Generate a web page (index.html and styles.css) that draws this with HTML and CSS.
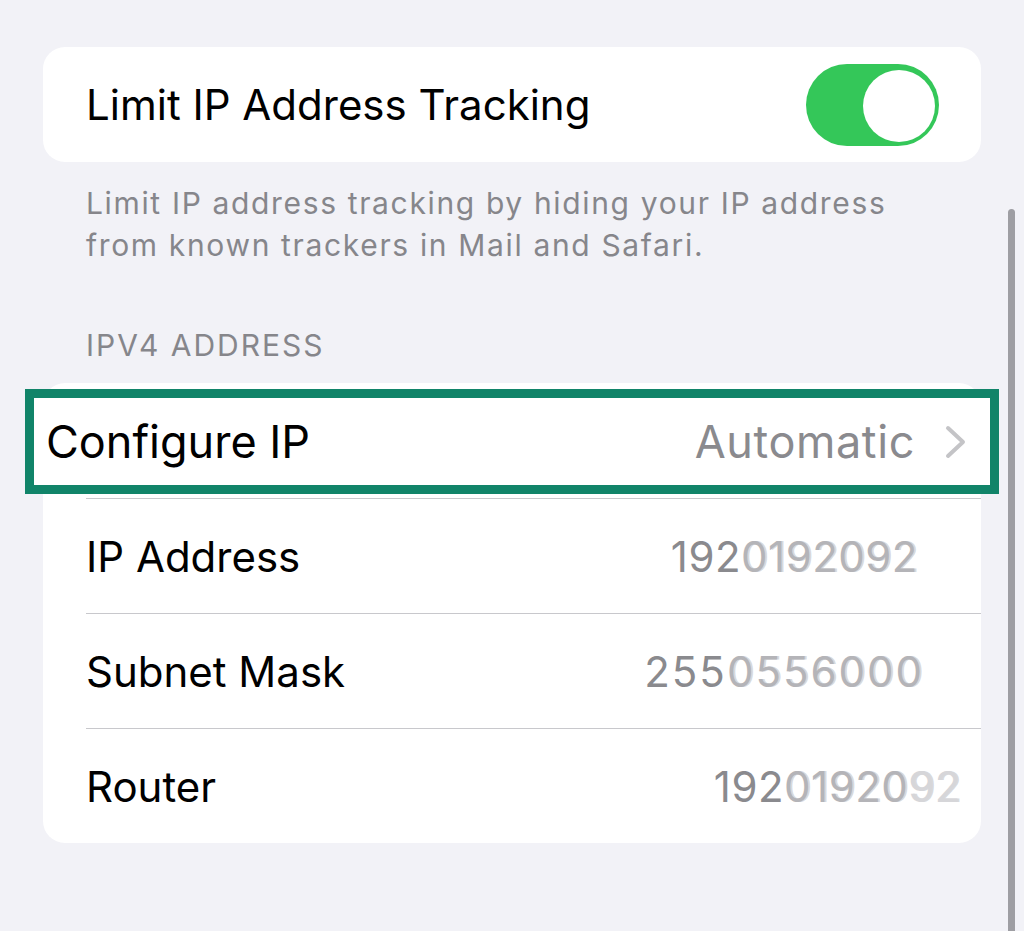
FILE: index.html
```html
<!DOCTYPE html>
<html lang="en">
<head>
<meta charset="utf-8">
<title>Limit IP Address Tracking</title>
<link rel="stylesheet" href="styles.css">
</head>
<body>
<main class="page">
  <section class="card card-toggle">
    <span class="title">Limit IP Address Tracking</span>
    <span class="toggle" role="switch" aria-checked="true"><span class="knob"></span></span>
  </section>
  <p class="footnote">Limit IP address tracking by hiding your IP address from known trackers in Mail and Safari.</p>
  <h2 class="section-header">IPV4 ADDRESS</h2>
  <section class="card card-list">
    <div class="config-row">
      <span class="config-label">Configure IP</span>
      <span class="config-value">Automatic</span>
      <svg class="chevron" width="22" height="34" viewBox="0 0 22 34" aria-hidden="true"><path d="M3 3 L18 17 L3 31" fill="none" stroke="#c4c4c7" stroke-width="4" stroke-linecap="round" stroke-linejoin="round"/></svg>
    </div>
    <div class="row">
      <span class="label">IP Address</span>
      <span class="value value-ip">192<span class="ghost">0192092</span></span>
    </div>
    <div class="row">
      <span class="label">Subnet Mask</span>
      <span class="value value-mask">255<span class="ghost">0556000</span></span>
    </div>
    <div class="row">
      <span class="label">Router</span>
      <span class="value value-router">192<span class="ghost">01920<span class="faint">92</span></span></span>
    </div>
  </section>
</main>
<div class="scrollbar"></div>
</body>
</html>
```

FILE: styles.css
```css
html, body {
  margin: 0;
  padding: 0;
  background: #f2f2f7;
  height: 100%;
  overflow: hidden;
}
body {
  font-family: Inter, "Noto Sans", "Liberation Sans", sans-serif;
  color: #000;
  position: relative;
}
.page {
  padding: 47px 43px 0 43px;
  width: 938px;
}
.card {
  background: #fff;
  border-radius: 22px;
}
.card-toggle {
  height: 115px;
  box-sizing: border-box;
  padding: 0 42px 0 43px;
  display: flex;
  align-items: center;
  justify-content: space-between;
}
.title {
  font-size: 42px;
  letter-spacing: 0;
}
.toggle {
  position: relative;
  width: 133px;
  height: 82px;
  border-radius: 41px;
  background: #34c759;
  margin-top: 1px;
}
.knob {
  position: absolute;
  right: 4px;
  top: 6px;
  width: 72px;
  height: 72px;
  border-radius: 50%;
  background: #fff;
}
.footnote {
  margin: 20px 0 0 43px;
  font-size: 30px;
  line-height: 42px;
  letter-spacing: 1.65px;
  color: #86868b;
  width: 850px;
}
.section-header {
  margin: 62px 0 0 43px;
  font-size: 30px;
  line-height: 34px;
  letter-spacing: 2px;
  font-weight: 400;
  color: #86868b;
}
.card-list {
  margin-top: 21px;
  padding-top: 6px;
}
.config-row {
  margin: 0 -18px 4px -18px;
  height: 105px;
  box-sizing: border-box;
  border: 9px solid #118469;
  background: #fff;
  display: flex;
  align-items: center;
  padding: 0 23px 0 12px;
}
.config-label {
  font-size: 45px;
  flex: 1;
}
.config-value {
  font-size: 45px;
  letter-spacing: 0.6px;
  color: #8a8a8e;
  margin-right: 30px;
}
.chevron {
  display: block;
}
.row {
  margin-left: 43px;
  height: 115px;
  box-sizing: border-box;
  border-top: 1px solid #c8c8cc;
  display: flex;
  align-items: center;
  justify-content: space-between;
}
.label {
  font-size: 42px;
}
.value {
  font-size: 42px;
  letter-spacing: 0.5px;
  color: #8a8a8e;
}
.value-ip { margin-right: 63px; }
.value-mask { margin-right: 57px; letter-spacing: 2px; }
.value-router { margin-right: 20px; }
.ghost {
  color: #b4b4b8;
  text-shadow: 2px 0 0 rgba(180,180,184,0.5);
}
.faint {
  color: #d6d6d9;
}
.scrollbar {
  position: absolute;
  left: 1008px;
  top: 209px;
  width: 7px;
  bottom: 0;
  border-radius: 4px 4px 0 0;
  background: #9e9ea3;
}
```
